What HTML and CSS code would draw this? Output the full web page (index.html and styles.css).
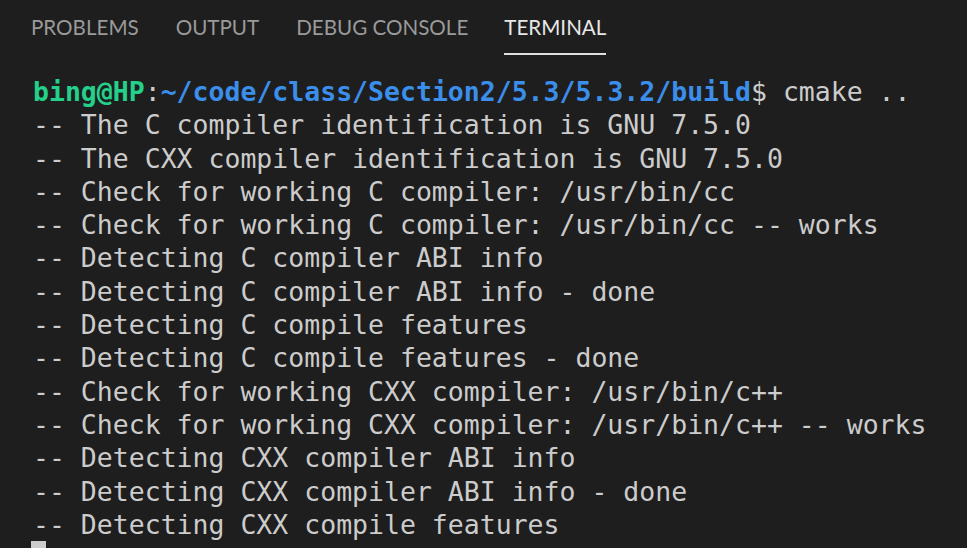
FILE: index.html
```html
<!DOCTYPE html>
<html>
<head>
<meta charset="utf-8">
<link rel="stylesheet" href="styles.css">
</head>
<body>
<div class="panel">
  <div class="tabs">
    <div class="tab">PROBLEMS</div>
    <div class="tab">OUTPUT</div>
    <div class="tab">DEBUG CONSOLE</div>
    <div class="tab active">TERMINAL</div>
  </div>
  <pre class="term"><span class="user">bing@HP</span>:<span class="path">~/code/class/Section2/5.3/5.3.2/build</span>$ cmake ..
-- The C compiler identification is GNU 7.5.0
-- The CXX compiler identification is GNU 7.5.0
-- Check for working C compiler: /usr/bin/cc
-- Check for working C compiler: /usr/bin/cc -- works
-- Detecting C compiler ABI info
-- Detecting C compiler ABI info - done
-- Detecting C compile features
-- Detecting C compile features - done
-- Check for working CXX compiler: /usr/bin/c++
-- Check for working CXX compiler: /usr/bin/c++ -- works
-- Detecting CXX compiler ABI info
-- Detecting CXX compiler ABI info - done
-- Detecting CXX compile features
<span class="cursor"></span></pre>
</div>
</body>
</html>
```
FILE: styles.css
```css
html, body {
  margin: 0;
  padding: 0;
  background: #1e1e1e;
  overflow: hidden;
}
.panel {
  width: 967px;
  height: 548px;
  background: #1e1e1e;
}
.tabs {
  display: flex;
  gap: 37px;
  padding-left: 31px;
  height: 55px;
  align-items: flex-start;
}
.tab {
  font-family: Lato, "Noto Sans", sans-serif;
  font-size: 20.6px;
  color: #9a9a9a;
  padding-top: 15px;
  height: 38px;
  box-sizing: content-box;
}
.tab.active {
  margin-left: -1px;
  color: #e7e7e7;
  border-bottom: 2px solid #e0e0e0;
}
.term {
  margin: 20px 0 0 0;
  padding-left: 33px;
  font-family: "DejaVu Sans Mono", monospace;
  font-size: 26.5px;
  line-height: 33.3px;
  color: #cccccc;
  white-space: pre;
}
.user {
  color: #23d18b;
  font-weight: bold;
}
.path {
  color: #3b8eea;
  font-weight: bold;
}
.cursor {
  display: inline-block;
  width: 15px;
  height: 33px;
  margin-left: -2px;
  background: #cccccc;
  vertical-align: top;
}
```
